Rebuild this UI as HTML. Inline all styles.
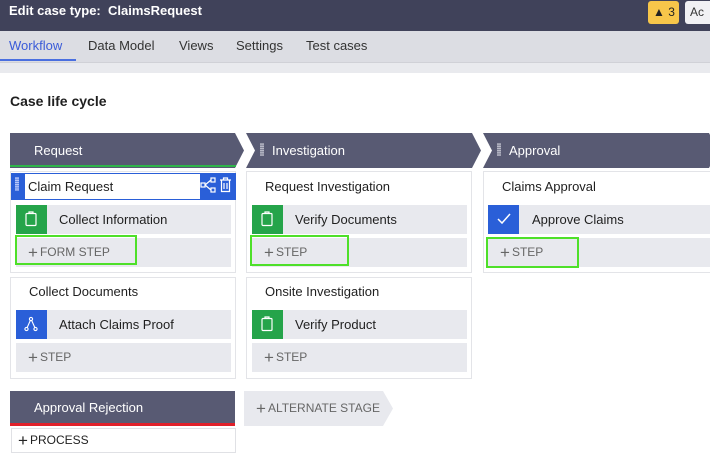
<!DOCTYPE html>
<html><head><style>
*{box-sizing:border-box;margin:0;padding:0}
body{width:710px;height:447px;overflow:hidden;background:#fff;font-family:"Liberation Sans",sans-serif;position:relative;color:#1f1f1f}
.a{position:absolute}
.hdr{left:0;top:0;width:710px;height:31px;background:#40425a}
.tabs{left:0;top:31px;width:710px;height:31px;background:#dcdde3}
.strip{left:0;top:62px;width:710px;height:11px;background:#e9eaee;border-top:1px solid #d0d1d7}
.tab{top:38px;font-size:13px;color:#333}
.stage{height:35px;top:133px;background:#585a73;color:#fff;font-size:13px;line-height:35px;clip-path:polygon(0 0,calc(100% - 9px) 0,100% 50%,calc(100% - 9px) 100%,0 100%)}
.stage2{clip-path:polygon(0 0,calc(100% - 9px) 0,100% 50%,calc(100% - 9px) 100%,0 100%,9px 50%)}
.card{border:1px solid #e3e4e8;background:#fff}
.step{height:29px;background:#e8e9ee;font-size:13px;line-height:29px}
.ic{position:absolute;left:0;top:0;width:31px;height:29px}
.add{height:29px;background:#e8e9ee;font-size:12px;color:#666;line-height:29px;padding-left:12px}
.p{font-size:17px;font-weight:300;vertical-align:-2px;margin-right:2px;color:#666}
.ttl{font-size:13px}
.hl{border:2px solid #4ee029}
.grip{display:inline-block;width:4px;height:13px;background-image:radial-gradient(#c8c9d4 0.8px,transparent 0.9px);background-size:2px 2.2px;vertical-align:-1px;margin-right:8px}
</style></head><body>
<div class="a hdr"></div>
<div class="a" style="left:9px;top:3px;color:#fff;font-weight:bold;font-size:13px">Edit case type:&nbsp; ClaimsRequest</div>
<div class="a" style="left:648px;top:1px;width:31px;height:23px;background:#f7c64a;border-radius:3px;font-size:12px;line-height:23px;padding-left:5px;color:#222"><b>▲</b> 3</div>
<div class="a" style="left:685px;top:1px;width:30px;height:23px;background:#f1f1f4;border-radius:3px;font-size:12px;line-height:23px;padding-left:5px;color:#333">Ac</div>
<div class="a tabs"></div>
<div class="a strip"></div>
<div class="a tab" style="left:9px;color:#3a5bd8">Workflow</div>
<div class="a" style="left:0;top:59px;width:76px;height:2px;background:#4a6fe0"></div>
<div class="a tab" style="left:88px">Data Model</div>
<div class="a tab" style="left:179px">Views</div>
<div class="a tab" style="left:236px">Settings</div>
<div class="a tab" style="left:306px">Test cases</div>
<div class="a" style="left:10px;top:93px;font-size:14px;font-weight:bold">Case life cycle</div>

<div class="a stage" style="left:10px;width:234px;padding-left:24px">Request</div>
<div class="a" style="left:10px;top:165px;width:226px;height:2px;background:#2fb54a"></div>
<div class="a stage stage2" style="left:246px;width:235px;padding-left:14px"><span class="grip"></span>Investigation</div>
<div class="a stage stage2" style="left:483px;width:235px;padding-left:14px"><span class="grip"></span>Approval</div>

<div class="a card" style="left:10px;top:171px;width:226px;height:102px"></div>
<div class="a" style="left:11px;top:173px;width:225px;height:27px;background:#2a5fd8"></div>
<div class="a" style="left:15px;top:177px;width:4px;height:14px;background-image:radial-gradient(#cfd8ff 0.8px,transparent 0.9px);background-size:2px 2.2px"></div>
<div class="a" style="left:25px;top:174px;width:175px;height:25px;background:#fff;font-size:13px;line-height:25px;padding-left:3px">Claim Request</div>
<svg class="a" style="left:200px;top:177px" width="16" height="16" viewBox="0 0 16 16" fill="none" stroke="#fff" stroke-width="1.2"><rect x="1" y="6" width="4" height="4"/><rect x="11" y="1" width="4" height="4"/><rect x="11" y="11" width="4" height="4"/><path d="M5 8L11 3M5 8L11 13"/></svg>
<svg class="a" style="left:219px;top:177px" width="13" height="16" viewBox="0 0 13 16" fill="none" stroke="#fff" stroke-width="1.2"><path d="M1 3h11M4.5 3V1h4v2M2.5 3.5v11h8v-11M5 6v6M8 6v6"/></svg>
<div class="a step" style="left:16px;top:205px;width:215px;padding-left:43px"><div class="ic" style="background:#25a44a"></div>Collect Information</div>
<svg class="a" style="left:25px;top:211px" width="12" height="16" viewBox="0 0 12 16" fill="none" stroke="#fff" stroke-width="1.2"><rect x="1" y="2.5" width="10" height="12" rx="1"/><path d="M4 2.5V1h4v1.5"/></svg>
<div class="a add" style="left:16px;top:238px;width:215px"><span class="p">+</span>FORM STEP</div>
<div class="a hl" style="left:15px;top:235px;width:122px;height:30px"></div>

<div class="a card" style="left:10px;top:277px;width:226px;height:102px"></div>
<div class="a ttl" style="left:29px;top:284px">Collect Documents</div>
<div class="a step" style="left:16px;top:310px;width:215px;padding-left:43px"><div class="ic" style="background:#2a5fd8"></div>Attach Claims Proof</div>
<svg class="a" style="left:24px;top:316px" width="14" height="16" viewBox="0 0 14 16" fill="none" stroke="#fff" stroke-width="1.1"><circle cx="7" cy="3" r="1.6"/><circle cx="2.5" cy="13" r="1.6"/><circle cx="11.5" cy="13" r="1.6"/><path d="M6.3 4.5L3.2 11.5M7.7 4.5L10.8 11.5"/></svg>
<div class="a add" style="left:16px;top:343px;width:215px"><span class="p">+</span>STEP</div>

<div class="a card" style="left:246px;top:171px;width:226px;height:102px"></div>
<div class="a ttl" style="left:265px;top:179px">Request Investigation</div>
<div class="a step" style="left:252px;top:205px;width:215px;padding-left:43px"><div class="ic" style="background:#25a44a"></div>Verify Documents</div>
<svg class="a" style="left:261px;top:211px" width="12" height="16" viewBox="0 0 12 16" fill="none" stroke="#fff" stroke-width="1.2"><rect x="1" y="2.5" width="10" height="12" rx="1"/><path d="M4 2.5V1h4v1.5"/></svg>
<div class="a add" style="left:252px;top:238px;width:215px"><span class="p">+</span>STEP</div>
<div class="a hl" style="left:250px;top:235px;width:99px;height:31px"></div>

<div class="a card" style="left:246px;top:277px;width:226px;height:102px"></div>
<div class="a ttl" style="left:265px;top:284px">Onsite Investigation</div>
<div class="a step" style="left:252px;top:310px;width:215px;padding-left:43px"><div class="ic" style="background:#25a44a"></div>Verify Product</div>
<svg class="a" style="left:261px;top:316px" width="12" height="16" viewBox="0 0 12 16" fill="none" stroke="#fff" stroke-width="1.2"><rect x="1" y="2.5" width="10" height="12" rx="1"/><path d="M4 2.5V1h4v1.5"/></svg>
<div class="a add" style="left:252px;top:343px;width:215px"><span class="p">+</span>STEP</div>

<div class="a card" style="left:483px;top:171px;width:230px;height:102px"></div>
<div class="a ttl" style="left:502px;top:179px">Claims Approval</div>
<div class="a step" style="left:488px;top:205px;width:222px;padding-left:44px"><div class="ic" style="background:#2a5fd8"></div>Approve Claims</div>
<svg class="a" style="left:497px;top:213px" width="14" height="12" viewBox="0 0 14 12" fill="none" stroke="#fff" stroke-width="1.5"><path d="M1 6l4 4 8-9"/></svg>
<div class="a add" style="left:488px;top:238px;width:222px"><span class="p">+</span>STEP</div>
<div class="a hl" style="left:486px;top:237px;width:93px;height:31px"></div>

<div class="a" style="left:10px;top:391px;width:225px;height:33px;background:#585a73;color:#fff;font-size:13px;line-height:33px;padding-left:24px">Approval Rejection</div>
<div class="a" style="left:10px;top:423px;width:225px;height:3px;background:#e0202a"></div>
<div class="a" style="left:11px;top:428px;width:225px;height:25px;border:1px solid #e0e1e5;font-size:12px;line-height:22px;padding-left:6px;color:#222"><span class="p" style="color:#222">+</span>PROCESS</div>
<div class="a" style="left:244px;top:391px;width:149px;height:35px;background:#e8e9ee;clip-path:polygon(0 0,139px 0,100% 50%,139px 100%,0 100%);font-size:12px;line-height:35px;padding-left:12px;color:#666"><span class="p">+</span>ALTERNATE STAGE</div>
</body></html>
